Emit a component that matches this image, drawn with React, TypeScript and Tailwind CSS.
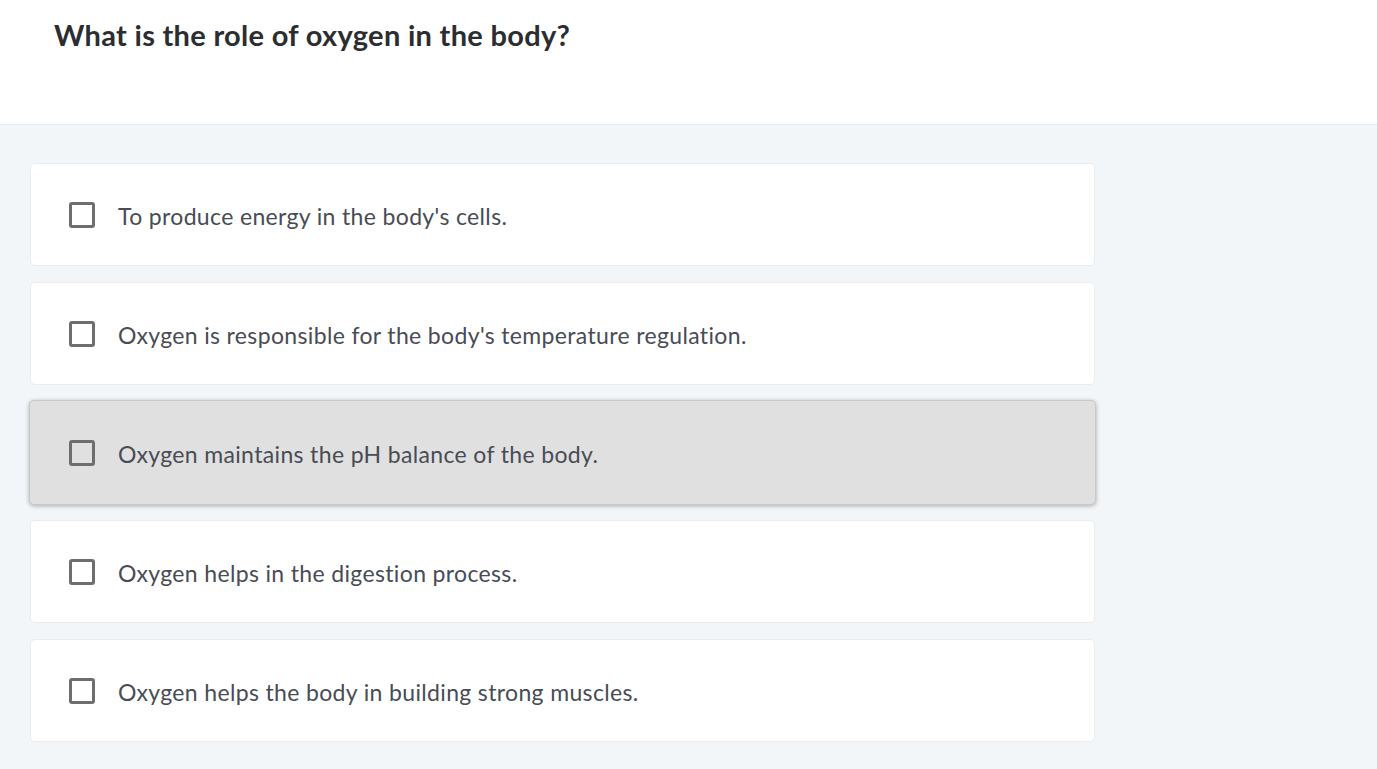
import React from "react";

const options = [
  "To produce energy in the body's cells.",
  "Oxygen is responsible for the body's temperature regulation.",
  "Oxygen maintains the pH balance of the body.",
  "Oxygen helps in the digestion process.",
  "Oxygen helps the body in building strong muscles.",
];

export default function App() {
  return (
    <div className="min-h-[769px] bg-[#f3f6f8]" style={{ fontFamily: "Lato, 'Noto Sans', sans-serif" }}>
      <div className="h-[125px] bg-white border-b border-[#e9edf0] pl-[54px] pt-[15px]">
        <h1 className="text-[29px] font-bold text-[#2b2d31] leading-[40px] tracking-[0.3px]">What is the role of oxygen in the body?</h1>
      </div>
      <div className="pl-[30px] pt-[38px] flex flex-col gap-[16px] w-[1095px]">
        {options.map((o, i) => (
          <div
            key={i}
            className={
              i === 2
                ? "h-[105px] -my-[1px] -mx-[1px] flex items-center pl-[39px] rounded-[5px] border border-[#c9c9c9] bg-[#e0e0e0] shadow-[0_1px_4px_rgba(0,0,0,0.3)]"
                : "h-[103px] flex items-center pl-[38px] rounded-[5px] border border-[#e8edf1] bg-white"
            }
          >
            <div className="w-[26px] h-[26px] rounded-[3px] border-[3px] border-[#6e6e6e] shrink-0" />
            <span className="ml-[23px] pt-[3px] text-[23px] text-[#484c55] leading-none tracking-[0.35px]">{o}</span>
          </div>
        ))}
      </div>
    </div>
  );
}
